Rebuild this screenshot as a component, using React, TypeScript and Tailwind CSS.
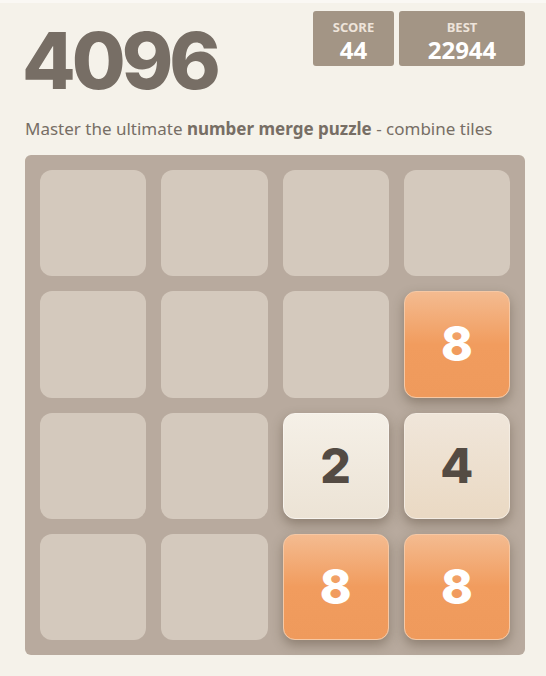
import React from "react";

type Cell = 0 | 2 | 4 | 8;

const grid: Cell[][] = [
  [0, 0, 0, 0],
  [0, 0, 0, 8],
  [0, 0, 2, 4],
  [0, 0, 8, 8],
];

function Tile({ v }: { v: Cell }) {
  if (v === 0) {
    return <div className="rounded-[12px] bg-[#d4c9bd]" />;
  }
  if (v === 2) {
    return (
      <div className="flex items-center justify-center rounded-[12px] bg-gradient-to-b from-[#f5f0e7] to-[#ece3d5] border border-[#f8f4ee] shadow-[0_5px_12px_rgba(60,45,30,0.35)] text-[#544b43] text-[48px] font-extrabold font-['Inter',sans-serif]">
        2
      </div>
    );
  }
  if (v === 4) {
    return (
      <div className="flex items-center justify-center rounded-[12px] bg-gradient-to-b from-[#f0e6da] to-[#ead9c3] border border-[#f4ece2] shadow-[0_5px_12px_rgba(60,45,30,0.35)] text-[#544b43] text-[48px] font-extrabold font-['Inter',sans-serif]">
        4
      </div>
    );
  }
  return (
    <div className="flex items-center justify-center rounded-[12px] bg-[linear-gradient(to_bottom,#f4bb90_0%,#f19c5e_50%,#ef9a5c_100%)] border border-[#f6c8a4] shadow-[0_5px_12px_rgba(60,45,30,0.35)] text-white text-[48px] font-extrabold font-['Inter',sans-serif]">
      8
    </div>
  );
}

export default function App() {
  return (
    <div className="min-h-[676px] bg-[#f5f2ea] border-t-[3px] border-[#faf8f4] font-['Noto_Sans',sans-serif]">
      <div className="w-[500px] ml-[25px]">
        <div className="flex justify-between items-start pt-[8px]">
          <h1 className="mt-[11px] ml-[-3px] text-[78px] leading-none font-extrabold tracking-[-4px] text-[#776e65] font-['Inter',sans-serif]">
            4096
          </h1>
          <div className="flex gap-[5px]">
            <div className="w-[81px] h-[55px] rounded-[3px] bg-[#a39585] flex flex-col items-center pt-[9px]">
              <span className="text-[13px] leading-[14px] font-bold text-[#eee4da]">SCORE</span>
              <span className="mt-[3px] text-[24px] leading-[26px] font-bold text-white">44</span>
            </div>
            <div className="w-[126px] h-[55px] rounded-[3px] bg-[#a39585] flex flex-col items-center pt-[9px]">
              <span className="text-[13px] leading-[14px] font-bold text-[#eee4da]">BEST</span>
              <span className="mt-[3px] text-[24px] leading-[26px] font-bold text-white">22944</span>
            </div>
          </div>
        </div>
        <p className="mt-[13px] h-[42px] text-[17px] leading-[32px] text-[#776e65] w-[480px]">
          Master the ultimate <b className="font-bold">number merge puzzle</b> - combine tiles strategically to reach the 4096 tile and beyond!
        </p>
        <div className="relative w-[500px] h-[500px] rounded-[6px] bg-[#b8aa9e] p-[15px] grid grid-cols-4 grid-rows-4 gap-[15px]">
          {grid.flat().map((v, i) => (
            <Tile key={i} v={v} />
          ))}
        </div>
      </div>
    </div>
  );
}
